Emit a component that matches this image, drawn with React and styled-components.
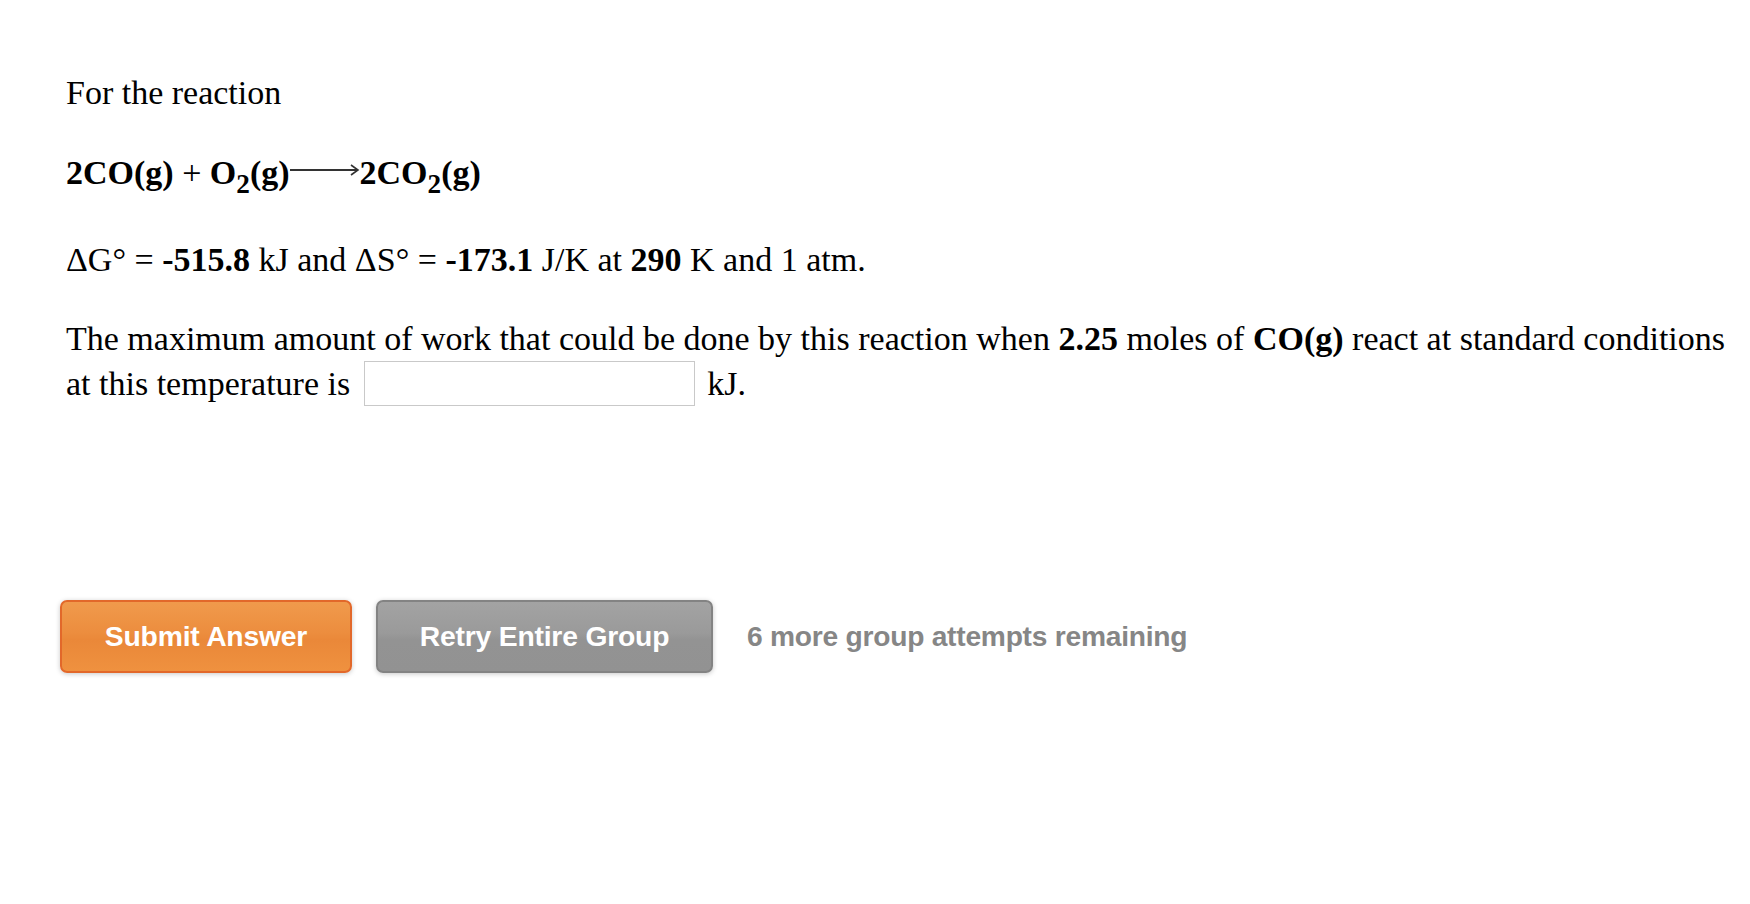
import React from 'react';
import styled, { createGlobalStyle } from 'styled-components';

const GlobalStyle = createGlobalStyle`
  html, body {
    margin: 0;
    padding: 0;
    background: #ffffff;
  }
`;

const Page = styled.div`
  width: 1750px;
  height: 904px;
  box-sizing: border-box;
  padding: 70px 0 0 66px;
  font-family: "Liberation Serif", "Times New Roman", serif;
  font-size: 34px;
  line-height: 45px;
  color: #000;
  overflow: hidden;
`;

const Para = styled.p`
  margin: 0 0 ${({ gap }) => gap}px;
  white-space: nowrap;
`;

const Sub = styled.sub`
  font-size: 0.8em;
  line-height: 0;
  vertical-align: -0.32em;
`;

const Plus = styled.span`
  font-weight: 400;
  margin: 0 0.25em;
`;

const Arrow = styled.svg`
  width: 70px;
  height: 14px;
  vertical-align: 0.2em;
`;

const AnswerInput = styled.input`
  box-sizing: border-box;
  width: 331px;
  height: 45px;
  margin: 0 12px 0 14px;
  vertical-align: top;
  border: 1px solid #c9c9c9;
  background: #fff;
  font-size: 24px;
  outline: none;
`;

const Actions = styled.div`
  display: flex;
  align-items: center;
  margin-top: 194px;
  margin-left: -6px;
`;

const Button = styled.button`
  box-sizing: border-box;
  width: ${({ w }) => w}px;
  height: 73px;
  margin-right: 24px;
  border-radius: 7px;
  border: 2px solid ${({ tone }) => (tone === 'orange' ? '#e2682a' : '#838383')};
  background: ${({ tone }) =>
    tone === 'orange'
      ? 'linear-gradient(#f09a4c 0%, #ec8d3e 45%, #ea8839 55%, #ef913f 100%)'
      : 'linear-gradient(#a3a3a3 0%, #9a9a9a 45%, #939393 55%, #929292 100%)'};
  box-shadow: 0 1px 5px rgba(0, 0, 0, 0.22);
  color: #fff;
  font-family: "Liberation Sans", Arial, Helvetica, sans-serif;
  font-weight: 700;
  font-size: 28.3px;
  letter-spacing: -0.2px;
  cursor: pointer;
`;

const Remaining = styled.span`
  margin-left: 10px;
  font-family: "Liberation Sans", Arial, Helvetica, sans-serif;
  font-weight: 700;
  font-size: 28.2px;
  letter-spacing: -0.25px;
  color: #868686;
`;

export default function App() {
  return (
    <>
      <GlobalStyle />
      <Page>
        <Para gap={35}>For the reaction</Para>
        <Para gap={42}>
          <b>
            2CO(g)<Plus>+</Plus>O<Sub>2</Sub>(g)
            <Arrow viewBox="0 0 70 14">
              <line x1="0" y1="7" x2="68" y2="7" stroke="#333" strokeWidth="2" />
              <path d="M61 2 L68 7 L61 12" fill="none" stroke="#333" strokeWidth="1.6" />
            </Arrow>
            2CO<Sub>2</Sub>(g)
          </b>
        </Para>
        <Para gap={34}>
          ΔG° = <b>-515.8</b> kJ and ΔS° = <b>-173.1</b> J/K at <b>290</b> K and 1 atm.
        </Para>
        <Para gap={0}>
          The maximum amount of work that could be done by this reaction when <b>2.25</b> moles of{' '}
          <b>CO(g)</b> react at standard conditions
          <br />
          at this temperature is
          <AnswerInput type="text" aria-label="answer" />
          kJ.
        </Para>
        <Actions>
          <Button tone="orange" w={292}>Submit Answer</Button>
          <Button tone="gray" w={337}>Retry Entire Group</Button>
          <Remaining>6 more group attempts remaining</Remaining>
        </Actions>
      </Page>
    </>
  );
}
